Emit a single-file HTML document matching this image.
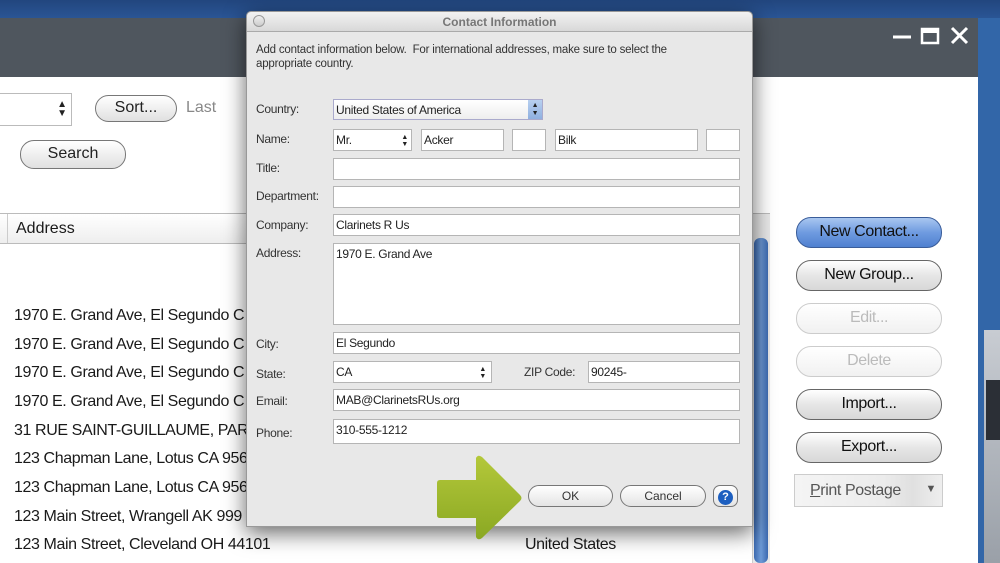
<!DOCTYPE html>
<html><head><meta charset="utf-8"><style>
*{margin:0;padding:0;box-sizing:border-box}
body{width:1000px;height:563px;overflow:hidden;position:relative;background:#2a5595;font-family:"Liberation Sans",sans-serif;color:#222}
.a{position:absolute}
.row{position:absolute;left:14px;font-size:16px;letter-spacing:-0.4px;color:#1a1a1a;white-space:nowrap}
.btn{position:absolute;left:796px;width:146px;height:31px;border:1.5px solid #666;border-radius:15px;background:linear-gradient(#fff,#e6e6e6 50%,#d8d8d8);font-size:16px;text-align:center;line-height:28px;letter-spacing:-0.4px;color:#111}
.dis{border-color:#ccc;color:#bbb;background:linear-gradient(#fff,#f1f1f1)}
.lbl{position:absolute;left:256px;font-size:12px;color:#333;letter-spacing:-0.3px}
.fld{position:absolute;left:333px;width:407px;height:22px;background:#fff;border:1px solid #b5b5b5;font-size:12px;padding:3px 2px;letter-spacing:-0.3px;color:#222}
.dbtn{position:absolute;top:485px;height:22px;border:1px solid #777;border-radius:11px;background:linear-gradient(#fff,#e4e4e4);font-size:12px;text-align:center;line-height:20px;color:#333}
</style></head><body>
<div class="a" style="left:0;top:0;width:1000px;height:18px;background:linear-gradient(#22467e,#2a5595)"></div>
<div class="a" style="left:978px;top:18px;width:22px;height:545px;background:#3266a8"></div>
<div class="a" style="left:984px;top:330px;width:16px;height:233px;background:linear-gradient(#c8ccd2,#9aa0a8)"></div>
<div class="a" style="left:986px;top:380px;width:14px;height:60px;background:#2b2f36"></div>
<div class="a" style="left:0;top:18px;width:978px;height:59px;background:#4f565e"></div>
<svg class="a" style="left:890px;top:25px" width="80" height="24"><path d="M3 12h18" stroke="#fff" stroke-width="3"/><rect x="32" y="4" width="16" height="14" fill="none" stroke="#fff" stroke-width="2.5"/><rect x="32" y="4" width="16" height="4" fill="#fff"/><path d="M62 3l15 15M77 3L62 18" stroke="#fff" stroke-width="3"/></svg>
<div class="a" style="left:0;top:77px;width:978px;height:486px;background:#fff"></div>
<div class="a" style="left:0;top:93px;width:72px;height:33px;border:1px solid #bbb;border-left:none;background:#fff;font-size:10px;text-align:right;padding:6px 4px 0 0;line-height:9px">▲<br>▼</div>
<div class="a" style="left:95px;top:95px;width:82px;height:27px;border:1.5px solid #777;border-radius:14px;background:linear-gradient(#fff,#e0e0e0);font-size:16px;text-align:center;line-height:24px">Sort...</div>
<div class="a" style="left:186px;top:99px;font-size:16px;color:#888">Last</div>
<div class="a" style="left:20px;top:140px;width:106px;height:29px;border:1.5px solid #777;border-radius:14px;background:linear-gradient(#fff,#e0e0e0);font-size:16px;text-align:center;line-height:26px">Search</div>
<div class="a" style="left:0;top:213px;width:770px;height:31px;border-top:1px solid #bbb;border-bottom:1px solid #bbb;background:linear-gradient(#fff,#eee)"></div>
<div class="a" style="left:7px;top:214px;width:1px;height:29px;background:#ccc"></div>
<div class="a" style="left:16px;top:220px;font-size:16px;color:#1a1a1a">Address</div>
<div class="a" style="left:752px;top:214px;width:18px;height:349px;background:#e8e8e8;border-left:1px solid #ccc"></div>
<div class="a" style="left:754px;top:238px;width:14px;height:325px;border-radius:6px;background:linear-gradient(90deg,#3c6ab0,#6d9ad6,#3c6ab0)"></div>
<div class="row" style="top:307px">1970 E. Grand Ave, El Segundo C</div>
<div class="row" style="top:336px">1970 E. Grand Ave, El Segundo C</div>
<div class="row" style="top:364px">1970 E. Grand Ave, El Segundo C</div>
<div class="row" style="top:393px">1970 E. Grand Ave, El Segundo C</div>
<div class="row" style="top:422px">31 RUE SAINT-GUILLAUME, PAR</div>
<div class="row" style="top:450px">123 Chapman Lane, Lotus CA 956</div>
<div class="row" style="top:479px">123 Chapman Lane, Lotus CA 956</div>
<div class="row" style="top:508px">123 Main Street, Wrangell AK 999</div>
<div class="row" style="top:536px">123 Main Street, Cleveland OH 44101</div>
<div class="row" style="left:525px;top:536px">United States</div>
<div class="btn" style="top:217px;border-color:#3a5d9a;background:linear-gradient(#a9c6f0,#6f9be0 50%,#4f80d0)">New Contact...</div>
<div class="btn" style="top:260px">New Group...</div>
<div class="btn dis" style="top:303px">Edit...</div>
<div class="btn dis" style="top:346px">Delete</div>
<div class="btn" style="top:389px">Import...</div>
<div class="btn" style="top:432px">Export...</div>
<div class="a" style="left:794px;top:474px;width:149px;height:33px;border:1px solid #ccc;background:linear-gradient(90deg,#f4f4f4,#ececec 60%,#e0e0e0 80%,#eee);font-size:16px;color:#555;padding:7px 0 0 15px;letter-spacing:-0.4px"><u>P</u>rint Postage<span style="position:absolute;right:6px;top:8px;font-size:11px">▼</span></div>
<!-- dialog -->
<div class="a" style="left:246px;top:11px;width:507px;height:516px;background:#e8e8e8;border:1px solid #999;border-radius:5px 5px 0 0;box-shadow:0 6px 22px rgba(0,0,0,.6)"></div>
<div class="a" style="left:247px;top:12px;width:505px;height:20px;border-radius:5px 5px 0 0;background:linear-gradient(#f2f2f2,#d8d8d8);border-bottom:1px solid #aaa;text-align:center;font-size:12px;font-weight:bold;color:#777;line-height:20px">Contact Information</div>
<div class="a" style="left:253px;top:15px;width:12px;height:12px;border-radius:6px;border:1px solid #999;background:linear-gradient(#eee,#ccc)"></div>
<div class="a" style="left:256px;top:43px;font-size:11.5px;color:#333;line-height:14px;letter-spacing:-0.2px">Add contact information below.&nbsp; For international addresses, make sure to select the<br>appropriate country.</div>
<div class="lbl" style="top:102px">Country:</div>
<div class="fld" style="top:99px;width:210px;height:21px;background:linear-gradient(#fff,#eee);border-color:#aac">United States of America<span style="position:absolute;right:0;top:0;width:14px;height:19px;background:linear-gradient(#b8d0f0,#8fb0e0);font-size:7px;text-align:center;line-height:8px;padding-top:2px">▲<br>▼</span></div>
<div class="lbl" style="top:132px">Name:</div>
<div class="fld" style="top:129px;width:79px">Mr.<span style="position:absolute;right:3px;top:4px;font-size:7px;line-height:7px">▲<br>▼</span></div>
<div class="fld" style="top:129px;left:421px;width:83px">Acker</div>
<div class="fld" style="top:129px;left:512px;width:34px"></div>
<div class="fld" style="top:129px;left:555px;width:143px">Bilk</div>
<div class="fld" style="top:129px;left:706px;width:34px"></div>
<div class="lbl" style="top:161px">Title:</div><div class="fld" style="top:158px"></div>
<div class="lbl" style="top:189px">Department:</div><div class="fld" style="top:186px"></div>
<div class="lbl" style="top:218px">Company:</div><div class="fld" style="top:214px">Clarinets R Us</div>
<div class="lbl" style="top:246px">Address:</div><div class="fld" style="top:243px;height:82px">1970 E. Grand Ave</div>
<div class="lbl" style="top:337px">City:</div><div class="fld" style="top:332px">El Segundo</div>
<div class="lbl" style="top:367px">State:</div>
<div class="fld" style="top:361px;width:159px">CA<span style="position:absolute;right:5px;top:4px;font-size:7px;line-height:7px">▲<br>▼</span></div>
<div class="lbl" style="left:524px;top:365px">ZIP Code:</div>
<div class="fld" style="top:361px;left:588px;width:152px">90245-</div>
<div class="lbl" style="top:394px">Email:</div><div class="fld" style="top:389px">MAB@ClarinetsRUs.org</div>
<div class="lbl" style="top:426px">Phone:</div><div class="fld" style="top:419px;height:25px">310-555-1212</div>
<div class="dbtn" style="left:528px;width:85px">OK</div>
<div class="dbtn" style="left:620px;width:86px">Cancel</div>
<div class="dbtn" style="left:713px;width:25px;border-radius:7px"><span style="display:inline-block;width:15px;height:15px;border-radius:8px;background:#1d5fc0;color:#fff;font-weight:bold;font-size:11px;line-height:15px;margin-top:3px">?</span></div>
<svg class="a" style="left:430px;top:450px" width="100" height="95"><defs><linearGradient id="g" x1="0" y1="0" x2="0" y2="1"><stop offset="0" stop-color="#b4c83a"/><stop offset="1" stop-color="#8aa823"/></linearGradient></defs><path d="M10 30h36V8q2-4 6-1l38 38q3 3 0 6L52 88q-4 3-6-1V68H10q-3 0-3-3V33q0-3 3-3z" fill="url(#g)"/></svg>
</body></html>
